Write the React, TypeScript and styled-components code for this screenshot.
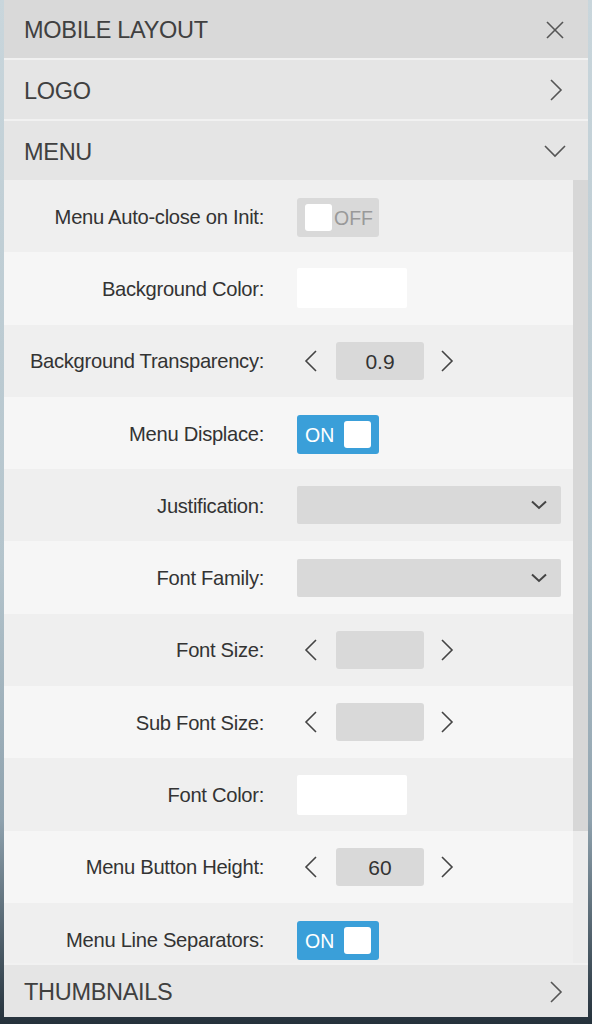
import React from "react";
import styled, { createGlobalStyle } from "styled-components";

const GlobalStyle = createGlobalStyle`
  html, body {
    margin: 0;
    padding: 0;
  }
  body {
    font-family: "Liberation Sans", Arial, sans-serif;
    background: linear-gradient(180deg, #c9d6dc 0%, #b4c4cc 55%, #8fa2ae 80%, #3e4d58 95%, #25313b 100%);
    width: 592px;
    height: 1024px;
    overflow: hidden;
  }
`;

const Backdrop = styled.div`
  width: 592px;
  height: 1024px;
  padding: 0 4px 7px 4px;
  box-sizing: border-box;
  display: flex;
`;

const Panel = styled.div`
  flex: 1;
  display: flex;
  flex-direction: column;
  overflow: hidden;
  background: #e5e5e5;
`;

const Header = styled.div<{ $top?: boolean; $h: number }>`
  height: ${(p) => p.$h}px;
  flex: none;
  display: flex;
  align-items: center;
  justify-content: space-between;
  padding: 3px 22px 0 20px;
  box-sizing: border-box;
  background: ${(p) => (p.$top ? "#d9d9d9" : "#e5e5e5")};
  border-top: ${(p) => (p.$top ? "none" : "2px solid #f1f1f1")};
  color: #404040;
  font-size: 23.5px;
  letter-spacing: -0.3px;
`;

const HeaderIcon = styled.svg`
  width: 22px;
  height: 22px;
  margin-top: -2px;
  fill: none;
  stroke: #555;
  stroke-width: 1.6;
`;

const Body = styled.div`
  height: 783px;
  flex: none;
  display: flex;
  overflow: hidden;
`;

const Rows = styled.div`
  flex: 1;
  overflow: hidden;
`;

const Row = styled.div<{ $alt: boolean }>`
  height: 72.3px;
  display: grid;
  grid-template-columns: 260px 1fr;
  column-gap: 33px;
  align-items: center;
  background: ${(p) => (p.$alt ? "#f6f6f6" : "#efefef")};
`;

const Label = styled.div`
  text-align: right;
  font-size: 20.2px;
  color: #333;
  letter-spacing: -0.3px;
  padding-top: 2px;
`;

const Track = styled.div`
  width: 15px;
  flex: none;
  background: #ececec;
  display: flex;
  flex-direction: column;
`;

const Thumb = styled.div`
  height: 651px;
  background: #d7d7d7;
`;

const Toggle = styled.div<{ $on: boolean }>`
  width: 82px;
  height: 39px;
  margin-top: 2px;
  box-sizing: border-box;
  border-radius: 3px;
  background: ${(p) => (p.$on ? "#3a9fd9" : "#d9d9d9")};
  display: flex;
  flex-direction: ${(p) => (p.$on ? "row" : "row-reverse")};
  align-items: center;
  justify-content: space-between;
  padding: ${(p) => (p.$on ? "2px 8px 0 8px" : "2px 6px 0 8px")};
  font-size: 19.5px;
  color: ${(p) => (p.$on ? "#fff" : "#999")};
`;

const Knob = styled.div`
  width: 27px;
  height: 27px;
  margin-top: -2px;
  border-radius: 3px;
  background: #fff;
`;

const ColorBox = styled.div`
  width: 110px;
  height: 40px;
  border-radius: 2px;
  background: #fff;
`;

const Stepper = styled.div`
  display: flex;
  align-items: center;
`;

const Arrow = styled.svg`
  width: 39px;
  height: 24px;
  fill: none;
  stroke: #444;
  stroke-width: 1.6;
`;

const Value = styled.div`
  width: 88px;
  height: 38px;
  border-radius: 3px;
  background: #d9d9d9;
  display: flex;
  align-items: center;
  justify-content: center;
  padding-top: 2px;
  box-sizing: border-box;
  font-size: 21px;
  color: #333;
`;

const Select = styled.div`
  width: 264px;
  height: 38px;
  border-radius: 2px;
  background: #d9d9d9;
  display: flex;
  align-items: center;
  justify-content: flex-end;
  padding-right: 13px;
  box-sizing: border-box;
`;

const SelectIcon = styled.svg`
  width: 18px;
  height: 10px;
  fill: none;
  stroke: #444;
  stroke-width: 2;
`;

type Control =
  | { kind: "toggle"; on: boolean }
  | { kind: "color" }
  | { kind: "stepper"; value: string }
  | { kind: "select" };

const settings: { label: string; control: Control }[] = [
  { label: "Menu Auto-close on Init:", control: { kind: "toggle", on: false } },
  { label: "Background Color:", control: { kind: "color" } },
  { label: "Background Transparency:", control: { kind: "stepper", value: "0.9" } },
  { label: "Menu Displace:", control: { kind: "toggle", on: true } },
  { label: "Justification:", control: { kind: "select" } },
  { label: "Font Family:", control: { kind: "select" } },
  { label: "Font Size:", control: { kind: "stepper", value: "" } },
  { label: "Sub Font Size:", control: { kind: "stepper", value: "" } },
  { label: "Font Color:", control: { kind: "color" } },
  { label: "Menu Button Height:", control: { kind: "stepper", value: "60" } },
  { label: "Menu Line Separators:", control: { kind: "toggle", on: true } },
];

function renderControl(c: Control) {
  switch (c.kind) {
    case "toggle":
      return (
        <Toggle $on={c.on}>
          <span>{c.on ? "ON" : "OFF"}</span>
          <Knob />
        </Toggle>
      );
    case "color":
      return <ColorBox />;
    case "stepper":
      return (
        <Stepper>
          <Arrow viewBox="0 0 39 24">
            <polyline points="19,2 9,12 19,22" />
          </Arrow>
          <Value>{c.value}</Value>
          <Arrow viewBox="0 0 39 24">
            <polyline points="18,2 28,12 18,22" />
          </Arrow>
        </Stepper>
      );
    case "select":
      return (
        <Select>
          <SelectIcon viewBox="0 0 18 10">
            <polyline points="2,1.5 9,8 16,1.5" />
          </SelectIcon>
        </Select>
      );
  }
}

export default function App() {
  return (
    <>
      <GlobalStyle />
      <Backdrop>
        <Panel>
          <Header $top $h={58}>
            MOBILE LAYOUT
            <HeaderIcon viewBox="0 0 22 22">
              <line x1="3" y1="3" x2="19" y2="19" />
              <line x1="19" y1="3" x2="3" y2="19" />
            </HeaderIcon>
          </Header>
          <Header $h={61}>
            LOGO
            <HeaderIcon viewBox="0 0 22 22">
              <polyline points="7,1 17,11 7,21" />
            </HeaderIcon>
          </Header>
          <Header $h={61}>
            MENU
            <HeaderIcon viewBox="0 0 22 22">
              <polyline points="1,6 11,16 21,6" />
            </HeaderIcon>
          </Header>
          <Body>
            <Rows>
              {settings.map((s, i) => (
                <Row key={s.label} $alt={i % 2 === 1}>
                  <Label>{s.label}</Label>
                  <div>{renderControl(s.control)}</div>
                </Row>
              ))}
            </Rows>
            <Track>
              <Thumb />
            </Track>
          </Body>
          <Header $h={54}>
            THUMBNAILS
            <HeaderIcon viewBox="0 0 22 22">
              <polyline points="7,1 17,11 7,21" />
            </HeaderIcon>
          </Header>
        </Panel>
      </Backdrop>
    </>
  );
}
